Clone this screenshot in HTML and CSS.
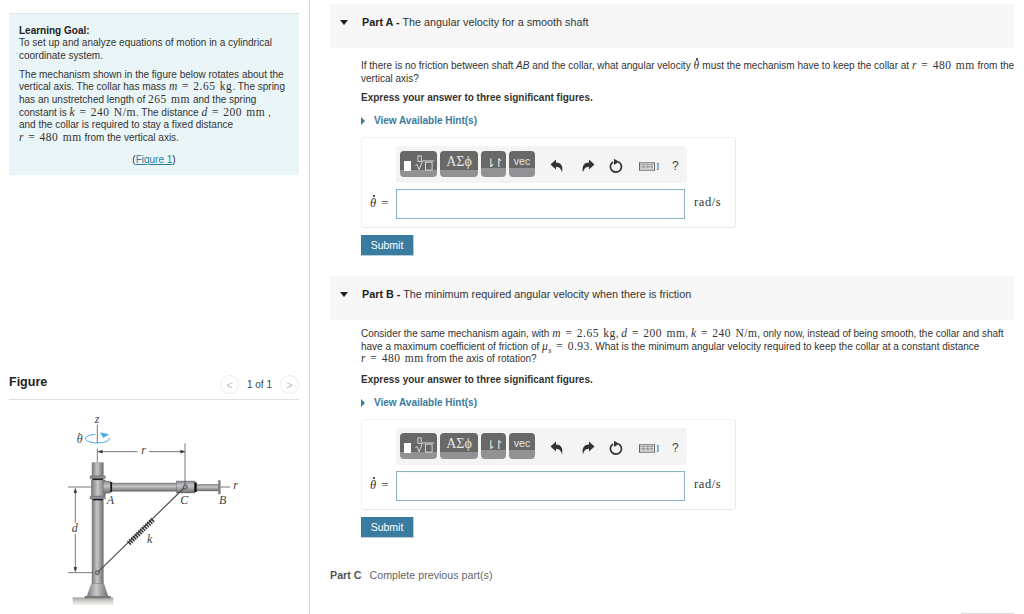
FILE: index.html
```html
<!DOCTYPE html>
<html lang="en">
<head>
<meta charset="utf-8">
<title>Learning Goal</title>
<link rel="stylesheet" href="styles.css">
</head>
<body>
<svg class="defs" width="0" height="0" aria-hidden="true">
  <symbol id="undo" viewBox="0 0 14 14"><path d="M.5 5.500 L6 .5 V3.500 C10.500 3.500 13.500 6.500 12 13.500 C11 9.500 9.500 8 6 7.800 V10.500 Z"/></symbol>
  <symbol id="redo" viewBox="0 0 14 14"><path d="M13.500 5.500 L8 .5 V3.500 C3.500 3.500 .5 6.500 2 13.500 C3 9.500 4.500 8 8 7.800 V10.500 Z"/></symbol>
  <symbol id="reload" viewBox="0 0 14 14"><path d="M9.300 2.700 A5.500 5.500 0 1 1 4 3" fill="none" stroke="#333" stroke-width="1.700"/><path d="M5 -.2 L10 2.700 L5 6 Z" fill="#333"/></symbol>
  <symbol id="kbd" viewBox="0 0 22 11"><rect x=".5" y=".5" width="21" height="10" fill="#f4f4f4" stroke="#333"/><path d="M2 3h18M2 5.200h18M2 7.400h18" stroke="#555" stroke-width="1.300" stroke-dasharray="1.200 .6"/></symbol>
  <symbol id="radical" viewBox="0 0 24 18"><rect x="3.500" y=".5" width="4" height="6.500" fill="none" stroke="#e8e8e8"/><path d="M.5 12 L2.500 11 L5 17 L9 6.500 H23" fill="none" stroke="#e8e8e8"/><rect x="12.500" y="8" width="8" height="9.500" fill="none" stroke="#e8e8e8"/></symbol>
</svg>
<div class="page">
  <aside class="left">
    <section class="goal">
      <p class="goal-intro"><b>Learning Goal:</b><br>To set up and analyze equations of motion in a cylindrical<br>coordinate system.</p>
      <p>The mechanism shown in the figure below rotates about the<br>vertical axis. The collar has mass <span class="m"><i>m</i> = 2.65 kg</span>. The spring<br>has an unstretched length of <span class="m">265 mm</span> and the spring<br>constant is <span class="m"><i>k</i> = 240 N/m</span>. The distance <span class="m"><i>d</i> = 200 mm</span> ,<br>and the collar is required to stay a fixed distance<br><span class="m"><i>r</i> = 480 mm</span> from the vertical axis.</p>
      <p class="figlink">(<a href="#fig">Figure 1</a>)</p>
    </section>
    <div class="fig-head" id="fig">
      <h2>Figure</h2>
      <div class="pager"><span class="circle">&lt;</span><span class="count">1 of 1</span><span class="circle">&gt;</span></div>
    </div>
    <div class="figure">
      <svg width="190" height="204" viewBox="0 0 570 612">
        <defs>
          <linearGradient id="gv" x1="0" x2="1" y1="0" y2="0"><stop offset="0" stop-color="#77797b"/><stop offset=".45" stop-color="#c6c8ca"/><stop offset="1" stop-color="#6d6f71"/></linearGradient>
          <linearGradient id="gh" x1="0" x2="0" y1="0" y2="1"><stop offset="0" stop-color="#85878a"/><stop offset=".4" stop-color="#c4c6c8"/><stop offset="1" stop-color="#6a6c6e"/></linearGradient>
          <linearGradient id="gg" x1="0" x2="0" y1="0" y2="1"><stop offset="0" stop-color="#a8a8a0"/><stop offset="1" stop-color="#fff"/></linearGradient>
        </defs>
        <rect x="68" y="562" width="122" height="26" fill="url(#gg)"/>
        <path d="M125 520h36l14 42H110Z" fill="url(#gv)" stroke="#666"/>
        <rect x="104" y="558" width="78" height="7" fill="#77797b"/>
        <rect x="126" y="158" width="34" height="362" fill="url(#gv)" stroke="#666"/>
        <rect x="120" y="197" width="46" height="9" rx="2" fill="#8a8c8e" stroke="#555"/>
        <rect x="128" y="206" width="30" height="4" fill="#111"/>
        <rect x="120" y="258" width="46" height="9" rx="2" fill="#8a8c8e" stroke="#555"/>
        <rect x="128" y="267" width="30" height="4" fill="#111"/>
        <rect x="124" y="210" width="42" height="48" fill="url(#gv)" stroke="#666"/>
        <rect x="160" y="213" width="22" height="37" rx="3" fill="url(#gh)" stroke="#666"/>
        <rect x="181" y="216" width="6" height="30" fill="#111"/>
        <rect x="186" y="219" width="195" height="25" fill="url(#gh)" stroke="#666"/>
        <rect x="438" y="223" width="68" height="20" fill="url(#gh)" stroke="#666"/>
        <rect x="379" y="213" width="56" height="36" fill="url(#gh)" stroke="#555"/>
        <rect x="433" y="217" width="7" height="29" fill="#111"/>
        <rect x="505" y="212" width="6" height="40" fill="#7f8183" stroke="#666"/>
        <g fill="none" stroke="#444" stroke-width="2.200">
          <path d="M142 44V100M142 116V156"/>
          <path d="M145 125H262M297 125H404"/>
          <path d="M405 100V226"/>
          <path d="M54 231H124M512 231H540"/>
          <path d="M54 488H128"/>
          <path d="M76 236V338M76 372V484"/>
          <path d="M145 125l12-4v8ZM404 125l-12-4v8ZM76 236l-4 12h8ZM76 484l-4-12h8Z" fill="#333"/>
        </g>
        <path d="M142 488L405 231" stroke="#4c4c4c" stroke-width="3.500"/>
        <path d="M236 400L309 329" stroke="#333" stroke-width="15" stroke-dasharray="4.500 3" />
        <circle cx="142" cy="488" r="6" fill="#999" stroke="#333" stroke-width="2"/>
        <circle cx="406" cy="231" r="6" fill="#999" stroke="#333" stroke-width="2"/>
        <path d="M136 73 A36 13 0 1 0 178 84" fill="none" stroke="#45ade8" stroke-width="3"/>
        <path d="M150 67 L177 73 L160 84 Z" fill="#45ade8"/>
        <g class="fig-label">
          <text x="134" y="38">z</text>
          <text x="80" y="98">θ</text>
          <circle cx="88" cy="70" r="2" fill="#444"/>
          <text x="274" y="132">r</text>
          <text x="550" y="238">r</text>
          <text x="170" y="281">A</text>
          <text x="391" y="281">C</text>
          <text x="507" y="281">B</text>
          <text x="65" y="367">d</text>
          <text x="291" y="399">k</text>
        </g>
      </svg>
    </div>
  </aside>
  <main class="right">
    <section class="part part-a">
      <header class="part-head"><span class="tri"></span><h3><b>Part A -</b> The angular velocity for a smooth shaft</h3></header>
      <div class="part-body">
        <p class="q q-a">If there is no friction between shaft <i>AB</i> and the collar, what angular velocity <span class="m thd"><i>θ</i></span> must the mechanism have to keep the collar at <span class="m"><i>r</i> = 480 mm</span> from the<br>vertical axis?</p>
        <p class="express">Express your answer to three significant figures.</p>
        <p class="hint"><span class="tri-r"></span>View Available Hint(s)</p>
        <div class="card">
          <div class="toolbar">
            <span class="btn b1"><span class="sq"></span><svg class="ir"><use href="#radical"/></svg></span>
            <span class="btn b2">ΑΣϕ</span>
            <span class="btn b3">⇂↾</span>
            <span class="btn b4">vec</span>
            <span class="tools">
              <svg class="i16"><use href="#undo"/></svg>
              <svg class="i16"><use href="#redo"/></svg>
              <svg class="i16"><use href="#reload"/></svg>
              <span class="kb"><svg class="ik"><use href="#kbd"/></svg>]</span>
              <span class="q-mark">?</span>
            </span>
          </div>
          <div class="answer">
            <span class="lhs m"><span class="thd"><i>θ</i></span> =</span>
            <span class="input"></span>
            <span class="unit m">rad/s</span>
          </div>
        </div>
        <button class="submit">Submit</button>
      </div>
    </section>
    <section class="part part-b">
      <header class="part-head"><span class="tri"></span><h3><b>Part B -</b> The minimum required angular velocity when there is friction</h3></header>
      <div class="part-body">
        <p class="q q-b">Consider the same mechanism again, with <span class="m"><i>m</i> = 2.65 kg</span>, <span class="m"><i>d</i> = 200 mm</span>, <span class="m"><i>k</i> = 240 N/m</span>, only now, instead of being smooth, the collar and shaft<br>have a maximum coefficient of friction of <span class="m"><i>μ<sub>s</sub></i> = 0.93</span>. What is the minimum angular velocity required to keep the collar at a constant distance<br><span class="m"><i>r</i> = 480 mm</span> from the axis of rotation?</p>
        <p class="express">Express your answer to three significant figures.</p>
        <p class="hint"><span class="tri-r"></span>View Available Hint(s)</p>
        <div class="card">
          <div class="toolbar">
            <span class="btn b1"><span class="sq"></span><svg class="ir"><use href="#radical"/></svg></span>
            <span class="btn b2">ΑΣϕ</span>
            <span class="btn b3">⇂↾</span>
            <span class="btn b4">vec</span>
            <span class="tools">
              <svg class="i16"><use href="#undo"/></svg>
              <svg class="i16"><use href="#redo"/></svg>
              <svg class="i16"><use href="#reload"/></svg>
              <span class="kb"><svg class="ik"><use href="#kbd"/></svg>]</span>
              <span class="q-mark">?</span>
            </span>
          </div>
          <div class="answer">
            <span class="lhs m"><span class="thd"><i>θ</i></span> =</span>
            <span class="input"></span>
            <span class="unit m">rad/s</span>
          </div>
        </div>
        <button class="submit">Submit</button>
      </div>
    </section>
    <p class="part-c"><b>Part C</b><span>Complete previous part(s)</span></p>
    <div class="corner"></div>
  </main>
</div>
</body>
</html>
```
FILE: styles.css
```css
* { box-sizing: border-box; }
html, body { margin: 0; padding: 0; }
body { font-family: "Liberation Sans", Arial, sans-serif; font-size: 10px; color: #333; background: #fff; overflow: hidden; }
p { margin: 0; }
.defs { position: absolute; }
.page { display: flex; width: 1024px; height: 614px; overflow: hidden; }
.left { width: 310px; flex: none; height: 614px; border-right: 1px solid #cdd3e2; padding: 13px 10px 0 9px; }
.goal { height: 162px; background: #eaf5f7; border-top: 1px solid #dfe7ea; padding: 11px 10px 0; line-height: 12.6px; white-space: nowrap; }
.goal-intro { margin-bottom: 7px; line-height: 12.300px; }
.goal b { color: #222; }
.m { font-family: "Liberation Serif", "Times New Roman", serif; font-size: 11.5px; letter-spacing: .55px; word-spacing: .8px; color: #333; line-height: 1; }
.m sub { line-height: 0; font-size: 8px; }
.thd { position: relative; display: inline-block; }
.thd::after { content: ""; position: absolute; left: 3px; top: -2px; width: 1.500px; height: 1.500px; border-radius: 50%; background: #333; }
.figlink { text-align: center; margin-top: 10px; }
.figlink a { color: #2f7b9d; text-decoration: underline; }
.fig-head { margin-top: 198px; height: 27px; display: flex; justify-content: space-between; align-items: flex-start; border-bottom: 1px solid #dcdfe3; }
.fig-head h2 { margin: 1px 0 0; font-size: 12.5px; font-weight: 700; color: #222; line-height: 16px; }
.pager { display: flex; align-items: center; gap: 8px; margin-top: 2px; }
.circle { width: 19px; height: 19px; border: 1px solid #ececec; border-radius: 50%; display: flex; align-items: center; justify-content: center; color: #bcbcbc; font-size: 11px; }
.count { font-size: 10px; color: #444; }
.figure { padding: 10px 0 0 41px; }
.fig-label text { font-family: "Liberation Serif", serif; font-style: italic; font-size: 36px; fill: #444; }
.right { flex: 1; height: 614px; padding: 4px 10px 0 20px; display: flex; flex-direction: column; min-width: 0; }
.part-head { height: 44px; background: #f7f7f7; display: flex; align-items: flex-start; padding: 12px 0 0 10px; }
.tri { width: 0; height: 0; margin: 4px 14px 0 0; border-left: 4.500px solid transparent; border-right: 4.500px solid transparent; border-top: 5px solid #222; }
h3 { margin: 0; font-size: 10.800px; font-weight: 400; line-height: 13px; color: #333; white-space: nowrap; }
h3 b { color: #222; }
.part-body { padding-left: 31px; }
.q { font-size: 10px; line-height: 12.500px; white-space: nowrap; color: #333; }
.q .m { font-size: 11.500px; letter-spacing: .5px; word-spacing: 1px; }
.q-a { margin-top: 12px; }
.q-b { margin-top: 8px; margin-bottom: 8.500px; }
.express { font-weight: 700; font-size: 10px; line-height: 12px; margin-top: 7px; color: #333; }
.hint { font-weight: 700; font-size: 10px; line-height: 12px; margin-top: 11px; color: #3a7a9c; display: flex; align-items: center; }
.tri-r { width: 0; height: 0; margin-right: 9px; border-top: 4px solid transparent; border-bottom: 4px solid transparent; border-left: 4px solid #3a7a9c; }
.card { width: 375px; height: 91px; margin-top: 10px; border: 1px solid #e8e8e8; border-top-color: #f2f2f2; border-left-color: #f2f2f2; border-radius: 4px; padding: 8px 0 0 34px; }
.toolbar { width: 291px; height: 37px; background: #f4f4f4; border-radius: 4px; display: flex; align-items: flex-start; padding: 5px 0 0 4px; gap: 3px; }
.btn { height: 26px; border-radius: 4px; background: linear-gradient(#686868 0, #686868 74%, #929295 74%, #929295 100%); color: #e6e6e6; display: flex; align-items: center; justify-content: center; padding-bottom: 4px; }
.b1 { width: 37px; gap: 4px; padding: 0 0 2px 2px; }
.b2 { width: 38px; font-family: "Liberation Serif", serif; font-size: 14px; }
.b3 { width: 25px; font-family: "DejaVu Sans", sans-serif; font-size: 12px; letter-spacing: -2px; background: linear-gradient(#686868 0, #686868 65%, #929295 65%, #929295 100%); padding-bottom: 3px; }
.b4 { width: 26px; font-size: 10.500px; background: linear-gradient(#686868 0, #686868 65%, #929295 65%, #929295 100%); padding-bottom: 6px; }
.sq { width: 7px; height: 10px; background: #fff; margin-top: 6px; }
.ir { width: 20px; height: 16px; }
.tools { display: flex; align-items: center; height: 26px; margin-top: 2px; }
.i16 { width: 14px; height: 14px; fill: #333; flex: none; }
.tools .i16:nth-child(1) { margin-left: 12px; }
.tools .i16:nth-child(2) { margin-left: 17px; }
.tools .i16:nth-child(3) { margin-left: 14px; }
.kb { display: flex; align-items: center; margin-left: 16px; font-size: 9px; color: #333; font-family: "Liberation Serif", serif; }
.ik { width: 16px; height: 9px; margin-right: 1px; }
.q-mark { margin-left: 13px; font-size: 12px; color: #444; }
.answer { display: flex; align-items: center; margin: 5px 0 0 -27px; height: 31px; }
.lhs { width: 27px; padding-left: 1px; white-space: nowrap; font-size: 12.500px; }
.input { width: 289px; height: 30px; border: 1px solid #8db4ca; background: #fff; box-shadow: inset 0 0 2px #dfeaf0; }
.unit { margin: -2px 0 0 9px; font-size: 12.500px; letter-spacing: .6px; }
.submit { display: block; width: 53px; height: 21px; margin-top: 7px; padding: 0; border: 0; background: #3a7ca0; color: #fff; font: 10.500px "Liberation Sans", Arial, sans-serif; border-bottom: 1px solid #b6cfdd; border-right: 1px solid #b6cfdd; }
.part-b { margin-top: 20px; }
.part-c { margin-top: 31px; color: #666; font-size: 10.700px; line-height: 13px; }
.part-c b { color: #555; }
.part-c span { margin-left: 8px; }
.corner { margin-top: auto; align-self: flex-end; width: 53px; height: 1px; background: #d9d9d9; }
```
